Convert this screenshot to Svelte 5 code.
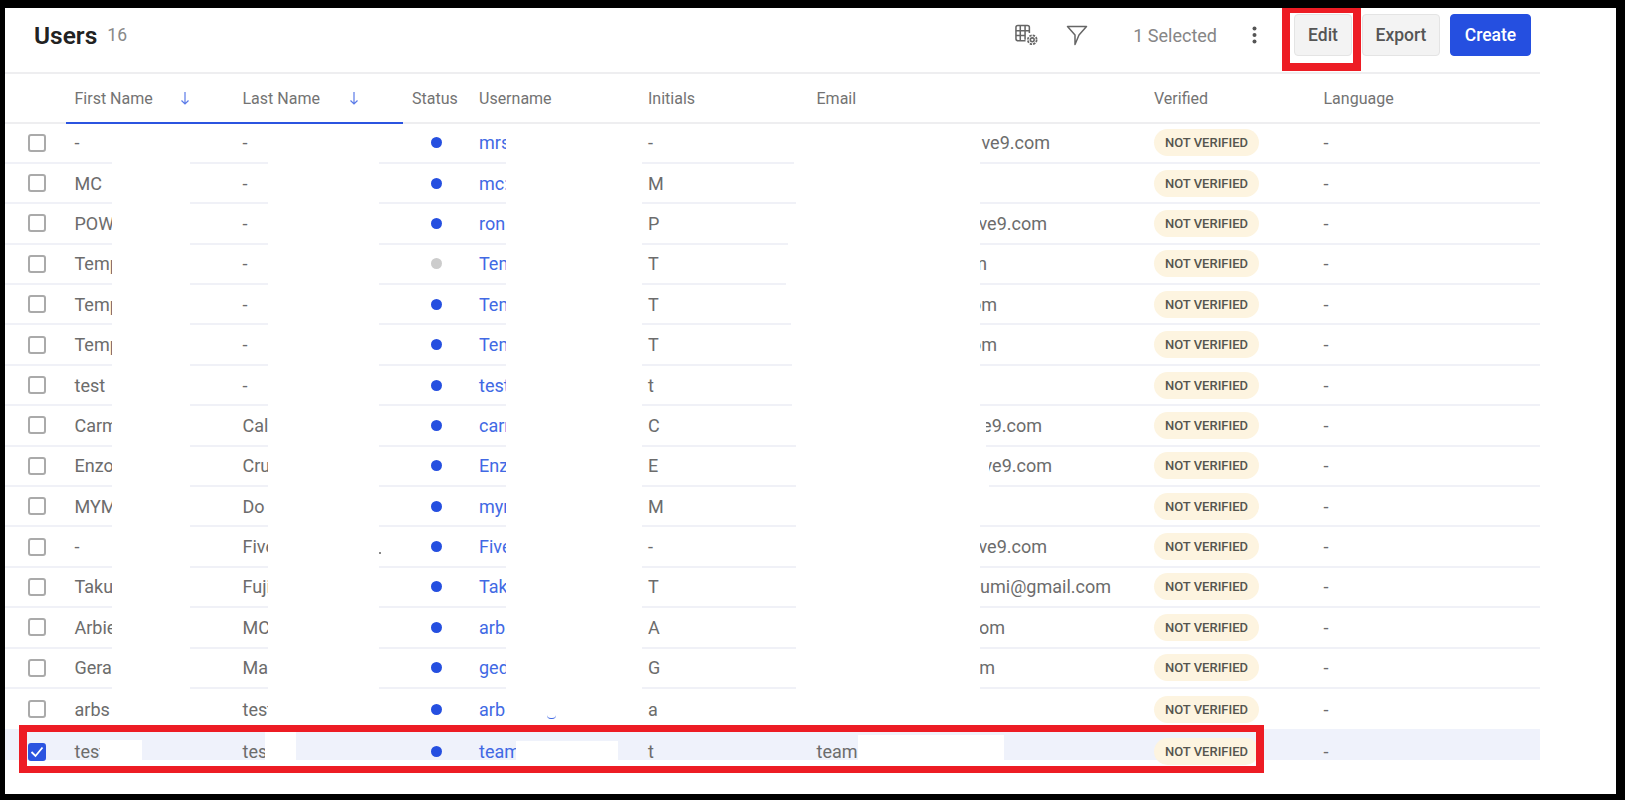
<script>
	// email: visible tail of the address, end: x where it stops, gap: [left, right] of the white-out
	const rows = [
		{ first: '-', last: '-', user: 'mrs', ini: '-', email: 've9.com', end: 1050, gap: [794, 980] },
		{ first: 'MC', last: '-', user: 'mc:', ini: 'M', gap: [796, 980] },
		{ first: 'POW', last: '-', user: 'ron', ini: 'P', email: 've9.com', end: 1047, gap: [788, 980] },
		{ first: 'Temp', last: '-', user: 'Tem', ini: 'T', email: 'm', end: 987, gap: [786, 980], off: true },
		{ first: 'Temp', last: '-', user: 'Tem', ini: 'T', email: 'om', end: 997, gap: [791, 980] },
		{ first: 'Temp', last: '-', user: 'Tem', ini: 'T', email: 'om', end: 997, gap: [792, 980] },
		{ first: 'test', last: '-', user: 'test', ini: 't', gap: [792, 980] },
		{ first: 'Carm', last: 'Cal', user: 'carr', ini: 'C', email: 've9.com', end: 1042, gap: [796, 986] },
		{ first: 'Enzo', last: 'Cru', user: 'Enz', ini: 'E', email: 've9.com', end: 1052, gap: [796, 989] },
		{ first: 'MYM', last: 'Do', user: 'myr', ini: 'M', gap: [796, 980] },
		{ first: '-', last: 'Five', user: 'Five', ini: '-', email: 've9.com', end: 1047, gap: [796, 980] },
		{ first: 'Taku', last: 'Fuji', user: 'Tak', ini: 'T', email: 'umi@gmail.com', end: 1111, gap: [796, 980] },
		{ first: 'Arbie', last: 'MC', user: 'arbi', ini: 'A', email: 'om', end: 1005, gap: [796, 980] },
		{ first: 'Gera', last: 'Ma', user: 'ged', ini: 'G', email: 'm', end: 995, gap: [796, 980] },
		{ first: 'arbs', last: 'test.', user: 'arb', ini: 'a', gap: [796, 980] }
	];
	const selected = [
		{ x: 95, y: 11, w: 42, h: 20 },
		{ x: 260, y: 3, w: 31, h: 28 },
		{ x: 511, y: 12, w: 102, h: 19 },
		{ x: 853, y: 6, w: 146, h: 25 }
	];
	const heads = ['Status', 'Username', 'Initials', 'Email', 'Verified', 'Language'];
</script>

<main class="panel">
	<header class="top">
		<div class="title">
			<h1>Users</h1>
			<span class="count">16</span>
		</div>
		<div class="actions">
			<div class="icons">
				<svg width="23" height="22" viewBox="0 0 24 22" fill="none" stroke="#666" stroke-width="1.6">
					<path d="M11 17H3a2 2 0 0 1-2-2V3a2 2 0 0 1 2-2h10a2 2 0 0 1 2 2v6" />
					<path d="M1 6.5h14M1 11.500h10M5.500 1v16M10.500 1v15" />
					<circle cx="18" cy="16" r="2" />
					<circle cx="18" cy="16" r="4.600" stroke-dasharray="2.500 1.100" stroke-width="1.800" />
				</svg>
				<svg width="22" height="21" viewBox="0 0 22 21" fill="none" stroke="#666" stroke-width="1.500" stroke-linejoin="round">
					<path d="M1.500 1.500h19l-7.500 8.500-4 9.500V10z" />
				</svg>
			</div>
			<span class="picked">1 Selected</span>
			<svg class="kebab" width="5" height="18" viewBox="0 0 5 18" fill="#555">
				<circle cx="2.500" cy="2.500" r="2" /><circle cx="2.500" cy="9" r="2" /><circle cx="2.500" cy="15.500" r="2" />
			</svg>
			<div class="buttons">
				<button class="edit">Edit</button>
				<button class="export">Export</button>
				<button class="create">Create</button>
			</div>
		</div>
	</header>

	<section class="table">
		<div class="row head">
			<div></div>
			<div class="cell sort">First Name
				<svg width="10" height="13" viewBox="0 0 10 13" fill="none" stroke="#5b7be8" stroke-width="1.200"><path d="M5 0v12M1.500 8.500 5 12l3.500-3.500" /></svg>
			</div>
			<div class="cell sort">Last Name
				<svg width="10" height="13" viewBox="0 0 10 13" fill="none" stroke="#5b7be8" stroke-width="1.200"><path d="M5 0v12M1.500 8.500 5 12l3.500-3.500" /></svg>
			</div>
			{#each heads as h}
				<div class="cell">{h}</div>
			{/each}
		</div>

		{#each rows as r, i}
			<div class="row" class:nolines={i === rows.length - 1}>
				<div class="check"><span class="box"></span></div>
				<div class="cell">{r.first}</div>
				<div class="cell">{r.last}</div>
				<div class="status"><span class="dot" class:off={r.off}></span></div>
				<div class="cell link">{r.user}</div>
				<div class="cell">{r.ini}</div>
				<div class="cell tail" style="padding-right: {1145 - r.end}px">{r.email ?? ''}</div>
				<div class="cell"><span class="badge">NOT VERIFIED</span></div>
				<div class="cell">-</div>
				<span class="mask m1"></span>
				<span class="mask m2"></span>
				<span class="mask m3"></span>
				<span class="mask" style="left: {r.gap[0] - 5}px; width: {r.gap[1] - r.gap[0]}px"></span>
				{#if i === 10}<span class="speck dotted"></span>{/if}
				{#if i === 14}<span class="speck tailg"></span>{/if}
			</div>
		{/each}

		<div class="row current">
			<div class="check"><span class="box on">
				<svg width="14" height="12" viewBox="0 0 14 12" fill="none" stroke="#fff" stroke-width="1.800"><path d="M1.500 6 5.500 10l7-8.500" /></svg>
			</span></div>
			<div class="cell">test</div>
			<div class="cell">test</div>
			<div class="status"><span class="dot"></span></div>
			<div class="cell link">team</div>
			<div class="cell">t</div>
			<div class="cell">team</div>
			<div class="cell"><span class="badge">NOT VERIFIED</span></div>
			<div class="cell">-</div>
			{#each selected as m}
				<span class="mask white" style="left: {m.x}px; top: {m.y}px; width: {m.w}px; height: {m.h}px"></span>
			{/each}
		</div>
	</section>

	<!-- red callouts drawn on top of the screenshot -->
	<span class="callout rowbox"></span>
	<span class="callout editbox"></span>
</main>

<style>
	:global(body) {
		background: #000;
		font-family: Roboto, 'Liberation Sans', sans-serif;
	}

	.panel {
		position: relative;
		box-sizing: border-box;
		height: 786px;
		margin: 8px 9px 6px 5px;
		background: #fff;
		color: #6c6c6c;
	}

	.top {
		display: flex;
		align-items: center;
		justify-content: space-between;
		box-sizing: border-box;
		width: 1535px;
		height: 66px;
		padding: 0 9px 10px 29px;
		border-bottom: 2px solid #eeeef0;
	}

	.title {
		display: flex;
		align-items: center;
		gap: 10px;
	}

	h1 {
		margin: 0;
		font-size: 24.500px;
		font-weight: 600;
		color: #222;
	}

	.count {
		font-size: 17.500px;
		color: #888;
	}

	.actions {
		display: flex;
		align-items: center;
	}

	.icons {
		display: flex;
		align-items: center;
		gap: 28px;
		margin-right: 45px;
	}

	.picked {
		font-size: 18px;
		color: #868686;
		margin-right: 35px;
	}

	.kebab {
		margin-right: 37px;
	}

	.buttons {
		display: flex;
		gap: 10px;
	}

	button {
		height: 42px;
		padding: 0;
		border: 1px solid #e4e4e4;
		border-radius: 4px;
		background: #f3f3f3;
		color: #555;
		font: 500 17.500px Roboto, sans-serif;
	}

	.edit {
		width: 58px;
	}

	.export {
		width: 78px;
	}

	.create {
		width: 81px;
		border-color: #254fe0;
		background: #254fe0;
		color: #fff;
	}

	.table {
		width: 1535px;
	}

	.row {
		position: relative;
		display: grid;
		grid-template-columns: 60.5px 168px 169.5px 67px 169px 168.5px 337.5px 169.5px 225.5px;
		align-items: center;
		box-sizing: border-box;
		height: 40.4px;
		border-bottom: 2px solid #f0f1f7;
		font-size: 18px;
	}

	.row.head {
		height: 49.5px;
		border-bottom-color: #eeeef0;
		font-size: 16px;
		color: #737373;
	}

	.row.nolines {
		border-bottom: none;
	}

	.head::after {
		content: '';
		position: absolute;
		left: 60.5px;
		bottom: -2px;
		width: 337.5px;
		height: 2px;
		background: #2b54e0;
	}

	.cell {
		padding-left: 9px;
		white-space: nowrap;
	}

	.head .cell {
		padding-top: 2px;
	}

	.sort {
		display: flex;
		align-items: center;
		justify-content: space-between;
		padding-right: 44px;
	}

	.check {
		padding-left: 22.500px;
		display: flex;
	}

	.box {
		display: flex;
		align-items: center;
		justify-content: center;
		box-sizing: border-box;
		width: 18px;
		height: 18px;
		border: 2px solid #aaa;
		border-radius: 3px;
	}

	.box.on {
		border-color: #2b54e0;
		background: #2b54e0;
	}

	.status {
		display: flex;
		justify-content: center;
	}

	.dot {
		width: 11px;
		height: 11px;
		border-radius: 50%;
		background: #254fe0;
	}

	.dot.off {
		background: #ccc;
	}

	.link {
		color: #4169e4;
	}

	.tail {
		text-align: right;
	}

	.badge {
		display: inline-block;
		width: 105px;
		height: 27px;
		border-radius: 14px;
		background: #fdf4e0;
		color: #55554e;
		font-size: 13px;
		font-weight: 500;
		line-height: 27px;
		text-align: center;
	}

	.mask {
		position: absolute;
		top: 0;
		bottom: -2px;
		background: #fff;
	}

	.m1 {
		left: 107px;
		width: 78px;
	}

	.m2 {
		left: 263px;
		width: 111px;
	}

	.m3 {
		left: 501px;
		width: 136px;
	}

	.mask.white {
		bottom: auto;
	}

	/* bits of the original text that the white-out left showing */
	.speck {
		position: absolute;
	}

	.dotted {
		left: 374px;
		top: 25px;
		width: 1.500px;
		height: 2px;
		background: #888;
	}

	.tailg {
		left: 542px;
		top: 26px;
		width: 9px;
		height: 3px;
		border-bottom: 1.500px solid #4169e4;
		border-radius: 0 0 6px 6px;
	}

	.current {
		height: 31px;
		border-bottom: none;
		background: #eff2fb;
	}

	.current > .cell,
	.current > .status,
	.current > .check {
		padding-top: 9px;
	}

	.callout {
		position: absolute;
		box-sizing: border-box;
		border: 8px solid #ed1c24;
	}

	.rowbox {
		left: 14px;
		top: 717px;
		width: 1245px;
		height: 48px;
		border-width: 7px 8px;
	}

	.editbox {
		left: 1277px;
		top: 0;
		width: 79px;
		height: 63px;
		border-top-width: 5px;
	}
</style>
